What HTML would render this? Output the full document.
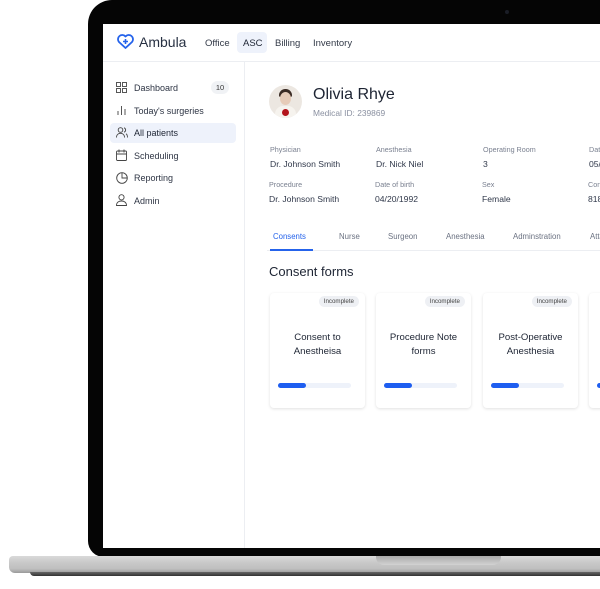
<!DOCTYPE html>
<html><head><meta charset="utf-8"><style>
*{margin:0;padding:0;box-sizing:border-box}
body{width:600px;height:589px;background:#fff;position:relative;overflow:hidden;font-family:"Liberation Sans",sans-serif;color:#1d2433}
.abs{position:absolute}
.bezel{left:88px;top:0;width:560px;height:557px;background:#050505;border-radius:24px 0 0 16px}
.screen{left:103px;top:24px;width:497px;height:524px;background:#fff;overflow:hidden}
.base{left:9px;top:556px;width:600px;height:17px;background:linear-gradient(#d9d9d9,#c8c8c8 40%,#bfbfbf 75%,#9a9a9a);border-radius:4px 0 0 6px}
.base2{left:30px;top:572px;width:580px;height:4px;background:linear-gradient(#666,#333);border-radius:0 0 0 30px}
.notch{left:376px;top:556px;width:125px;height:9px;background:linear-gradient(#a9a9a9,#d2d2d2);border-radius:0 0 8px 8px}
.t{position:absolute;white-space:nowrap}
.nav{font-size:9.5px;color:#333a48}
.side{font-size:9px;color:#2e3544}
.lab{font-size:7.2px;color:#7a8090}
.val{font-size:8.6px;color:#30384a}
.tab{font-size:7.8px;color:#6b7282}
.card{position:absolute;top:293px;width:95px;height:115px;background:#fff;border-radius:4px;box-shadow:0 1px 3px rgba(0,0,0,.12)}
.badge{position:absolute;top:3px;right:6px;height:11px;padding:0 5px;background:#eef0f4;border-radius:6px;font-size:6.2px;line-height:11px;color:#444}
.ct{position:absolute;left:0;right:0;top:38px;text-align:center;font-size:9.6px;line-height:14px;color:#1d2433}
.bar{position:absolute;left:8px;right:14px;top:90px;height:5px;background:#eef2fa;border-radius:3px}
.bar i{display:block;width:38%;height:5px;background:#1e5ef0;border-radius:3px}
svg{position:absolute}
</style></head><body>
<div class="abs bezel"></div>
<div class="abs" style="left:505px;top:10px;width:4px;height:4px;border-radius:50%;background:#1a1d26"></div>
<div class="abs base"></div>
<div class="abs base2"></div>
<div class="abs notch"></div>
<div class="abs screen">
  <div class="abs" style="left:0;top:37px;width:497px;height:1px;background:#eceef2"></div>
  <div class="abs" style="left:141px;top:38px;width:1px;height:490px;background:#eceef2"></div>
  <svg style="left:14px;top:10px" width="17" height="15" viewBox="0 0 17 15"><path d="M8.5 14 L2 8 A3.6 3.6 0 0 1 8.5 2.5 A3.6 3.6 0 0 1 15 8 Z" fill="none" stroke="#2563eb" stroke-width="1.8" stroke-linejoin="round"/><path d="M8.5 5v5M6 7.5h5" stroke="#2563eb" stroke-width="1.6"/></svg>
  <div class="t" style="left:36px;top:10px;font-size:14px;color:#273042">Ambula</div>
  <div class="t nav" style="left:102px;top:14px">Office</div>
  <div class="abs" style="left:134px;top:8px;width:30px;height:21px;background:#eef2fb;border-radius:4px"></div>
  <div class="t nav" style="left:140px;top:14px;color:#1d2433">ASC</div>
  <div class="t nav" style="left:172px;top:14px">Billing</div>
  <div class="t nav" style="left:210px;top:14px">Inventory</div>

  <svg style="left:13px;top:58px" width="11" height="11" viewBox="0 0 11 11" fill="none" stroke="#444" stroke-width=".9"><rect x=".5" y=".5" width="4" height="4"/><rect x="6.5" y=".5" width="4" height="4"/><rect x=".5" y="6.5" width="4" height="4"/><rect x="6.5" y="6.5" width="4" height="4"/></svg>
  <div class="t side" style="left:31px;top:59px">Dashboard</div>
  <div class="abs" style="left:108px;top:57px;width:18px;height:13px;background:#f0f2f5;border-radius:7px;font-size:7.5px;text-align:center;line-height:13px;color:#333">10</div>
  <svg style="left:13px;top:81px" width="11" height="11" viewBox="0 0 11 11" stroke="#555" stroke-width="1"><path d="M2 10V6M5.5 10V1M9 10V4"/></svg>
  <div class="t side" style="left:31px;top:82px">Today's surgeries</div>
  <div class="abs" style="left:7px;top:99px;width:126px;height:20px;background:#eef2fb;border-radius:4px"></div>
  <svg style="left:13px;top:103px" width="12" height="11" viewBox="0 0 12 11" fill="none" stroke="#444" stroke-width=".9"><circle cx="4.5" cy="3" r="2.3"/><path d="M.5 10.5c0-3 2-4.2 4-4.2s4 1.2 4 4.2M8 .8a2.3 2.3 0 0 1 0 4.4M10 6.8c1 .6 1.5 1.8 1.5 3.7"/></svg>
  <div class="t side" style="left:31px;top:104px;color:#1d2433">All patients</div>
  <svg style="left:13px;top:125px" width="11" height="12" viewBox="0 0 11 12" fill="none" stroke="#444" stroke-width=".9"><rect x=".5" y="2" width="10" height="9.5" rx="1"/><path d="M.5 5h10M3 .5v3M8 .5v3"/></svg>
  <div class="t side" style="left:31px;top:127px">Scheduling</div>
  <svg style="left:13px;top:148px" width="12" height="12" viewBox="0 0 12 12" fill="none" stroke="#444" stroke-width=".9"><circle cx="6" cy="6" r="5.3"/><path d="M6 .7V6h5.3"/></svg>
  <div class="t side" style="left:31px;top:149px">Reporting</div>
  <svg style="left:13px;top:170px" width="11" height="12" viewBox="0 0 11 12" fill="none" stroke="#444" stroke-width=".9"><circle cx="5.5" cy="3.3" r="2.6"/><path d="M.5 11.5c0-3 2.2-4.5 5-4.5s5 1.5 5 4.5z"/></svg>
  <div class="t side" style="left:31px;top:172px">Admin</div>

  <div class="abs" style="left:166px;top:61px;width:33px;height:33px;border-radius:50%;background:#ece7e1;overflow:hidden">
    <div class="abs" style="left:10px;top:4px;width:13px;height:8px;border-radius:7px 7px 2px 2px;background:#3b2b24"></div>
    <div class="abs" style="left:11px;top:7px;width:11px;height:13px;border-radius:50%;background:#e6cbb8"></div>
    <div class="abs" style="left:6px;top:21px;width:21px;height:14px;border-radius:8px 8px 0 0;background:#f6f3ee"></div>
    <div class="abs" style="left:13px;top:24px;width:7px;height:7px;border-radius:50%;background:#b3141b"></div>
  </div>
  <div class="t" style="left:210px;top:62px;font-size:16px;color:#1d2433">Olivia Rhye</div>
  <div class="t" style="left:210px;top:84px;font-size:8.4px;color:#8a90a0">Medical ID: 239869</div>

  <div class="t lab" style="left:167px;top:121px">Physician</div><div class="t val" style="left:167px;top:135px">Dr. Johnson Smith</div>
  <div class="t lab" style="left:273px;top:121px">Anesthesia</div><div class="t val" style="left:273px;top:135px">Dr. Nick Niel</div>
  <div class="t lab" style="left:380px;top:121px">Operating Room</div><div class="t val" style="left:380px;top:135px">3</div>
  <div class="t lab" style="left:486px;top:121px">Date</div><div class="t val" style="left:486px;top:135px">05/12</div>
  <div class="t lab" style="left:166px;top:156px">Procedure</div><div class="t val" style="left:166px;top:170px">Dr. Johnson Smith</div>
  <div class="t lab" style="left:272px;top:156px">Date of birth</div><div class="t val" style="left:272px;top:170px">04/20/1992</div>
  <div class="t lab" style="left:379px;top:156px">Sex</div><div class="t val" style="left:379px;top:170px">Female</div>
  <div class="t lab" style="left:485px;top:156px">Contact</div><div class="t val" style="left:485px;top:170px">818</div>

  <div class="abs" style="left:164px;top:226px;width:340px;height:1px;background:#eceef2"></div>
  <div class="t tab" style="left:170px;top:208px;color:#2563eb">Consents</div>
  <div class="abs" style="left:167px;top:225px;width:43px;height:2px;background:#2563eb"></div>
  <div class="t tab" style="left:236px;top:208px">Nurse</div>
  <div class="t tab" style="left:285px;top:208px">Surgeon</div>
  <div class="t tab" style="left:343px;top:208px">Anesthesia</div>
  <div class="t tab" style="left:410px;top:208px">Adminstration</div>
  <div class="t tab" style="left:487px;top:208px">Attachments</div>

  <div class="t" style="left:166px;top:240px;font-size:13px;color:#1d2433">Consent forms</div>
</div>
<div class="card" style="left:270px"><div class="badge">Incomplete</div><div class="ct">Consent to<br>Anestheisa</div><div class="bar"><i></i></div></div>
<div class="card" style="left:376px"><div class="badge">Incomplete</div><div class="ct">Procedure Note<br>forms</div><div class="bar"><i></i></div></div>
<div class="card" style="left:483px"><div class="badge">Incomplete</div><div class="ct">Post-Operative<br>Anesthesia</div><div class="bar"><i></i></div></div>
<div class="card" style="left:589px"><div class="bar" style="left:8px"><i></i></div></div>
</body></html>
